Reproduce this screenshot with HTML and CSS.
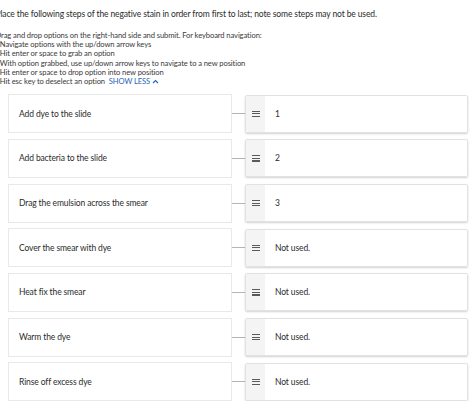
FILE: index.html
```html
<!DOCTYPE html>
<html>
<head>
<meta charset="utf-8">
<link rel="stylesheet" href="styles.css">
</head>
<body>
<div class="page">
  <p class="title">Place the following steps of the negative stain in order from first to last; note some steps may not be used.</p>
  <div class="help">
    <div>Drag and drop options on the right-hand side and submit. For keyboard navigation:</div>
    <div>•Navigate options with the up/down arrow keys</div>
    <div>•Hit enter or space to grab an option</div>
    <div>•With option grabbed, use up/down arrow keys to navigate to a new position</div>
    <div>•Hit enter or space to drop option into new position</div>
    <div>•Hit esc key to deselect an option <span class="toggle">SHOW LESS <svg width="7" height="5" viewBox="0 0 7 5"><path d="M1 4 L3.5 1.5 L6 4" fill="none" stroke="#2a63b8" stroke-width="1.2"/></svg></span></div>
  </div>
</div>
<div class="rows">
  <div class="row"><div class="item">Add dye to the slide</div><div class="link"></div><div class="slot"><div class="handle"><i></i><i></i><i></i></div><div class="val">1</div></div></div>
  <div class="row"><div class="item">Add bacteria to the slide</div><div class="link"></div><div class="slot"><div class="handle"><i></i><i></i><i></i></div><div class="val">2</div></div></div>
  <div class="row"><div class="item">Drag the emulsion across the smear</div><div class="link"></div><div class="slot"><div class="handle"><i></i><i></i><i></i></div><div class="val">3</div></div></div>
  <div class="row"><div class="item">Cover the smear with dye</div><div class="link"></div><div class="slot"><div class="handle"><i></i><i></i><i></i></div><div class="val">Not used.</div></div></div>
  <div class="row"><div class="item">Heat fix the smear</div><div class="link"></div><div class="slot"><div class="handle"><i></i><i></i><i></i></div><div class="val">Not used.</div></div></div>
  <div class="row"><div class="item">Warm the dye</div><div class="link"></div><div class="slot"><div class="handle"><i></i><i></i><i></i></div><div class="val">Not used.</div></div></div>
  <div class="row"><div class="item">Rinse off excess dye</div><div class="link"></div><div class="slot"><div class="handle"><i></i><i></i><i></i></div><div class="val">Not used.</div></div></div>
</div>
</body>
</html>
```
FILE: styles.css
```css
html, body {
  margin: 0;
  padding: 0;
  background: #fff;
}
body {
  font-family: Lato, "Liberation Sans", sans-serif;
  color: #2b2b2b;
  overflow: hidden;
}
.page {
  margin-left: -4.5px;
}
.title {
  margin: 0;
  padding-top: 9px;
  font-size: 8.5px;
  line-height: 10px;
  letter-spacing: -0.12px;
  color: #2b2b2b;
  white-space: nowrap;
}
.help {
  margin-top: 12px;
  font-size: 7.6px;
  line-height: 9.2px;
  letter-spacing: -0.1px;
  color: #3a3a3a;
  white-space: nowrap;
}
.toggle {
  color: #2a63b8;
  margin-left: 2px;
}
.toggle svg {
  vertical-align: 0.5px;
}
.rows {
  margin-top: 8px;
  padding-left: 8px;
  display: flex;
  flex-direction: column;
  gap: 5.7px;
}
.row {
  display: flex;
  align-items: center;
  height: 39px;
}
.item {
  width: 224px;
  height: 39px;
  box-sizing: border-box;
  border: 1px solid #e9e9e9;
  display: flex;
  align-items: center;
  padding-left: 10px;
  font-size: 8.5px;
  letter-spacing: -0.12px;
  color: #2b2b2b;
}
.link {
  width: 13px;
  height: 1px;
  background: #b5b5b5;
}
.slot {
  width: 223px;
  height: 38px;
  box-sizing: border-box;
  border: 1px solid #e2e2e2;
  box-shadow: 0 1px 2px rgba(0,0,0,0.18);
  border-radius: 2px;
  display: flex;
}
.handle {
  width: 19px;
  background: #f4f4f4;
  display: flex;
  flex-direction: column;
  justify-content: center;
  align-items: center;
  gap: 1.4px;
}
.handle i {
  display: block;
  width: 8px;
  height: 1.2px;
  background: #5a5a5a;
}
.val {
  display: flex;
  align-items: center;
  padding-left: 10px;
  font-size: 8.5px;
  letter-spacing: -0.12px;
  color: #2b2b2b;
}
```
